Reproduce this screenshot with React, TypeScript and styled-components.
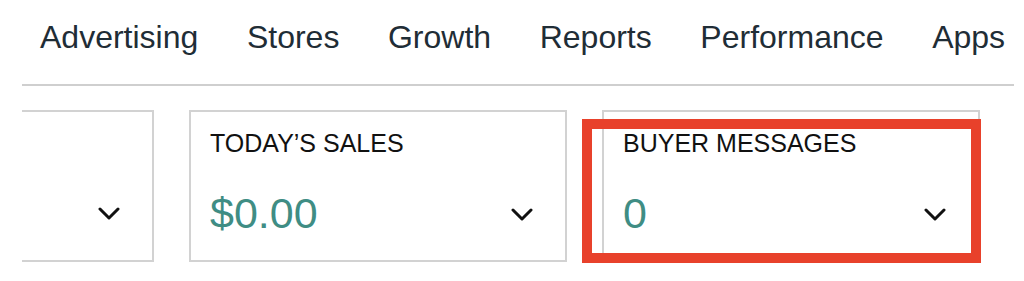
import React from "react";
import styled, { createGlobalStyle } from "styled-components";

const GlobalStyle = createGlobalStyle`
    html, body {
        margin: 0;
        padding: 0;
        background: #ffffff;
    }
    body {
        font-family: "Liberation Sans", Arial, Helvetica, sans-serif;
    }
`;

const Page = styled.div`
    width: 1024px;
    height: 281px;
    overflow: hidden;
    background: #ffffff;
`;

const NavBar = styled.nav`
    display: flex;
    gap: 48.6px;
    height: 86px;
    box-sizing: border-box;
    padding: 19px 0 0 18px;
    margin: 0 10px 0 22px;
    border-bottom: 2px solid #cfcfcf;
`;

const NavItem = styled.a`
    font-size: 32px;
    color: #1f2d36;
    text-decoration: none;
    white-space: nowrap;
`;

const CardRow = styled.div`
    display: flex;
    gap: 35px;
    margin: 24px 0 0 22px;
    overflow: hidden;
    padding-bottom: 8px;
`;

const Card = styled.div<{ $offset?: number }>`
    position: relative;
    flex: 0 0 378px;
    height: 152px;
    box-sizing: border-box;
    border: 2px solid #d2d2d2;
    margin-left: ${(p) => (p.$offset ? `${p.$offset}px` : "0")};
    padding: 17px 32px 0 19px;
    display: flex;
    flex-direction: column;
`;

const Label = styled.div`
    min-height: 28px;
    font-size: 25px;
    color: #111111;
    white-space: nowrap;
`;

const ValueRow = styled.div`
    display: flex;
    align-items: center;
    justify-content: space-between;
    min-height: 48px;
    margin-top: 31px;
`;

const Value = styled.div`
    font-size: 43px;
    color: #3f8d84;
`;

const Highlight = styled.div`
    position: absolute;
    left: -22px;
    top: 7px;
    right: -3px;
    bottom: -3px;
    border: 10px solid #e8412b;
    pointer-events: none;
`;

const Chevron = () => (
    <svg width="22" height="13" viewBox="0 0 22 13" style={{ marginTop: 2, marginLeft: "auto" }}>
        <polyline
            points="2,2 11,11 20,2"
            fill="none"
            stroke="#111"
            strokeWidth="3"
            strokeLinecap="round"
            strokeLinejoin="round"
        />
    </svg>
);

const navItems = ["Advertising", "Stores", "Growth", "Reports", "Performance", "Apps"];

const App: React.FC = () => (
    <Page>
        <GlobalStyle />
        <NavBar>
            {navItems.map((item) => (
                <NavItem key={item}>{item}</NavItem>
            ))}
        </NavBar>

        <CardRow>
            <Card $offset={-246}>
                <Label />
                <ValueRow>
                    <Chevron />
                </ValueRow>
            </Card>
            <Card>
                <Label>TODAY’S SALES</Label>
                <ValueRow>
                    <Value>$0.00</Value>
                    <Chevron />
                </ValueRow>
            </Card>
            <Card>
                <Label>BUYER MESSAGES</Label>
                <ValueRow>
                    <Value>0</Value>
                    <Chevron />
                </ValueRow>
                <Highlight />
            </Card>
        </CardRow>
    </Page>
);

export default App;
